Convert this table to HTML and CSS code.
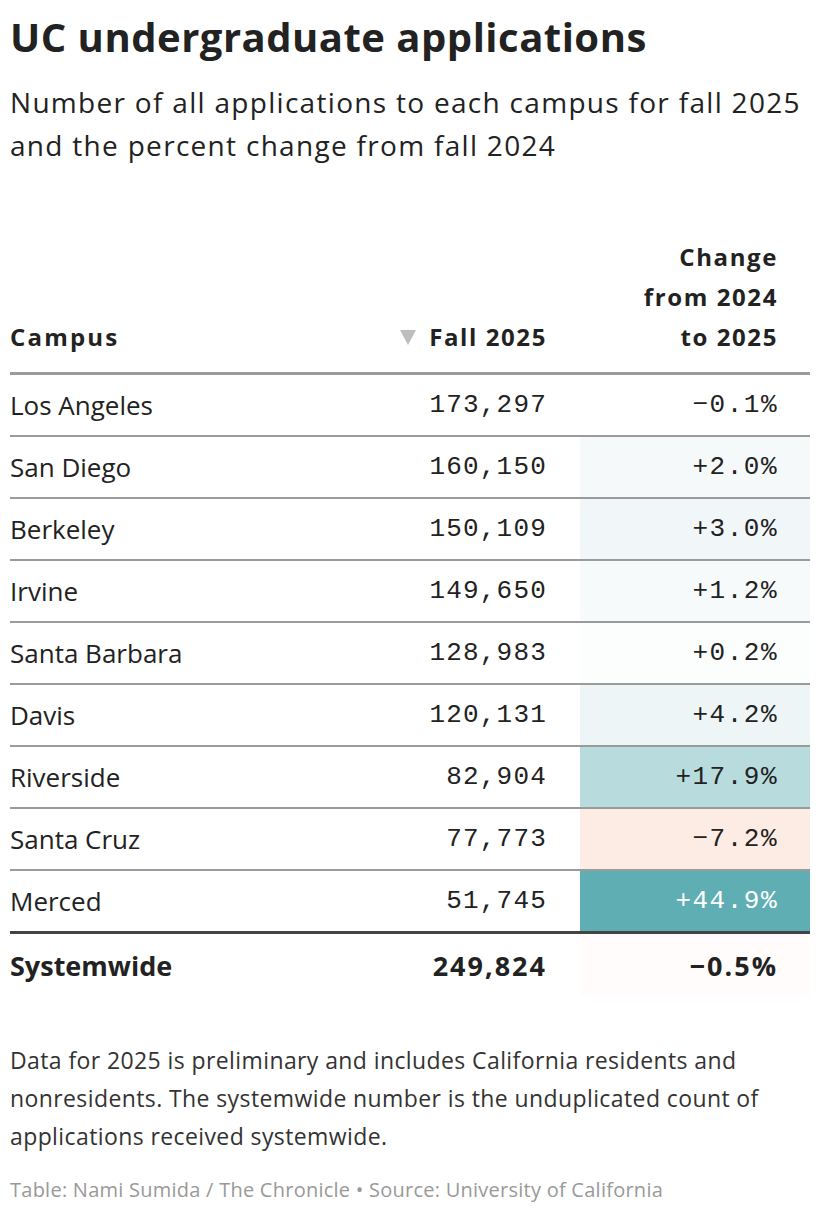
FILE: index.html
```html
<!DOCTYPE html>
<html lang="en">
<head>
<meta charset="utf-8">
<title>UC undergraduate applications</title>
<link rel="stylesheet" href="styles.css">
</head>
<body>
<div class="chart">
  <h1 class="title">UC undergraduate applications</h1>
  <p class="subtitle">Number of all applications to each campus for fall 2025 and the percent change from fall 2024</p>
  <table class="data">
    <thead>
      <tr>
        <th class="c-name">Campus</th>
        <th class="c-num"><span class="sort"></span>Fall 2025</th>
        <th class="c-chg">Change<br>from 2024<br>to 2025</th>
      </tr>
    </thead>
    <tbody>
      <tr><td class="c-name">Los Angeles</td><td class="c-num">173,297</td><td class="c-chg">−0.1%</td></tr>
      <tr><td class="c-name">San Diego</td><td class="c-num">160,150</td><td class="c-chg" style="background:#f5f9fa">+2.0%</td></tr>
      <tr><td class="c-name">Berkeley</td><td class="c-num">150,109</td><td class="c-chg" style="background:#f1f7f8">+3.0%</td></tr>
      <tr><td class="c-name">Irvine</td><td class="c-num">149,650</td><td class="c-chg" style="background:#f7fafb">+1.2%</td></tr>
      <tr><td class="c-name">Santa Barbara</td><td class="c-num">128,983</td><td class="c-chg" style="background:#fcfdfd">+0.2%</td></tr>
      <tr><td class="c-name">Davis</td><td class="c-num">120,131</td><td class="c-chg" style="background:#edf5f7">+4.2%</td></tr>
      <tr><td class="c-name">Riverside</td><td class="c-num">82,904</td><td class="c-chg" style="background:#b8dcde">+17.9%</td></tr>
      <tr><td class="c-name">Santa Cruz</td><td class="c-num">77,773</td><td class="c-chg" style="background:#fdece3">−7.2%</td></tr>
      <tr class="last"><td class="c-name">Merced</td><td class="c-num">51,745</td><td class="c-chg dark" style="background:#5faeb4">+44.9%</td></tr>
    </tbody>
    <tfoot>
      <tr><td class="c-name">Systemwide</td><td class="c-num">249,824</td><td class="c-chg" style="background:#fffcfb">−0.5%</td></tr>
    </tfoot>
  </table>
  <p class="note">Data for 2025 is preliminary and includes California residents and nonresidents. The systemwide number is the unduplicated count of applications received systemwide.</p>
  <p class="credit">Table: Nami Sumida / The Chronicle • Source: University of California</p>
</div>
</body>
</html>
```
FILE: styles.css
```css
html, body {
  margin: 0;
  padding: 0;
  background: #fff;
}
body {
  font-family: "Open Sans", Roboto, sans-serif;
  color: #222;
}
.chart {
  width: 800px;
  padding: 12px 10px 0 10px;
}
.title {
  margin: 0;
  font-size: 40px;
  line-height: 50px;
  font-weight: 700;
  color: #222;
  letter-spacing: 0.5px;
}
.subtitle {
  margin: 19px 0 0 0;
  font-size: 28px;
  line-height: 43px;
  font-weight: 400;
  letter-spacing: 1.3px;
  color: #222;
}
.data {
  width: 800px;
  margin-top: 70px;
  border-collapse: collapse;
}
.data th {
  font-size: 24px;
  line-height: 40px;
  font-weight: 700;
  letter-spacing: 1.6px;
  color: #222;
  vertical-align: bottom;
  padding: 0 0 15px 0;
  border-bottom: 3px solid #9b9b9b;
}
.data th.c-name { text-align: left; letter-spacing: 2.2px; }
.data th.c-num { text-align: right; padding-right: 33px; }
.data th.c-chg { text-align: right; padding-right: 32px; width: 198px; }
.sort {
  display: inline-block;
  width: 0;
  height: 0;
  border-left: 8px solid transparent;
  border-right: 8px solid transparent;
  border-top: 15px solid #bdbdbd;
  margin-right: 13px;
  vertical-align: 1px;
}
.data td {
  height: 60px;
  padding: 0;
  border-bottom: 2px solid #9b9b9b;
  vertical-align: middle;
}
.data td.c-name {
  font-size: 26px;
  color: #222;
  text-align: left;
}
.data td.c-num {
  font-family: "Liberation Mono", "DejaVu Sans Mono", monospace;
  font-size: 26px;
  letter-spacing: 1.2px;
  text-align: right;
  padding-right: 33px;
  color: #222;
}
.data td.c-chg {
  font-family: "Liberation Mono", "DejaVu Sans Mono", monospace;
  font-size: 26px;
  letter-spacing: 1.5px;
  text-align: right;
  padding-right: 32px;
  color: #222;
}
.data td.dark { color: #fff; }
.data tr.last td {
  border-bottom: 3px solid #444;
}
.data tfoot td {
  border-bottom: none;
  height: 62px;
}
.data tfoot td.c-name {
  font-weight: 700;
  font-size: 27px;
}
.data tfoot td.c-num,
.data tfoot td.c-chg {
  font-family: "Open Sans", Roboto, sans-serif;
  font-weight: 700;
  font-size: 27px;
  letter-spacing: 2px;
}
.note {
  margin: 45px 0 0 0;
  font-size: 23px;
  line-height: 38px;
  letter-spacing: 0.4px;
  color: #333;
}
.credit {
  margin: 21px 0 0 0;
  font-size: 20px;
  line-height: 28px;
  letter-spacing: 0.25px;
  color: #999;
}
```
